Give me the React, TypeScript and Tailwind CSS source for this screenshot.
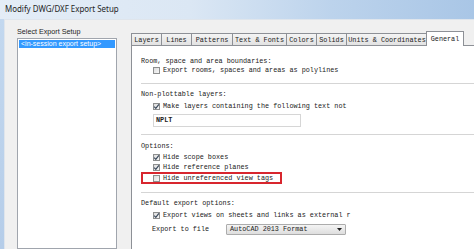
import React from "react";

const mono = { fontFamily: '"Liberation Mono", "DejaVu Sans Mono", monospace' };

function Check({ on }: { on?: boolean }) {
  return (
    <span className="relative inline-block h-[7px] w-[7px] shrink-0 border border-[#8e8f8f] bg-[linear-gradient(135deg,#dcdcdc,#f8f8f8)]">
      {on && (
        <svg viewBox="0 0 7 7" className="absolute -left-px -top-px h-[7px] w-[7px]">
          <path d="M1.2 3.6 L2.8 5.3 L5.9 1.3" fill="none" stroke="#3b4a5c" strokeWidth="1.2" />
        </svg>
      )}
    </span>
  );
}

function Row({ on, label }: { on?: boolean; label: string }) {
  return (
    <div className="flex h-[9px] items-center gap-[3px] pl-[12px] leading-[9px]">
      <Check on={on} />
      <span className="whitespace-nowrap">{label}</span>
    </div>
  );
}

const tabs = [
  { name: "Layers", w: "w-[31px]" },
  { name: "Lines", w: "w-[31px]" },
  { name: "Patterns", w: "w-[42px]" },
  { name: "Text & Fonts", w: "w-[55px]" },
  { name: "Colors", w: "w-[31px]" },
  { name: "Solids", w: "w-[31px]" },
  { name: "Units & Coordinates", w: "w-[82px]" },
];

export default function App() {
  return (
    <div className="flex h-[249px] w-[474px] flex-col overflow-hidden bg-[#c7daf0]">
      <div className="flex h-[19px] shrink-0 items-center bg-[linear-gradient(90deg,#e4edf7_0%,#dbe7f4_40%,#bcd3ec_70%,#a9c6e6_100%)] pl-[5px]">
        <span
          className="origin-left scale-x-[0.9] whitespace-nowrap text-[8.8px] text-[#1e1e1e]"
          style={{ fontFamily: '"Noto Sans", "Open Sans", sans-serif' }}
        >
          Modify DWG/DXF Export Setup
        </span>
      </div>
      <div className="flex min-h-0 flex-1">
        <div className="w-[4px] shrink-0 bg-[linear-gradient(180deg,#c3d8ef,#b5cde9)]" />
        <div className="flex min-h-0 flex-1 border-l border-t border-[#dfe5ec] bg-[#f0f0f0]">
          <div className="flex w-[112px] shrink-0 flex-col pl-[12px]">
            <div className="mt-[6px] h-[11px] whitespace-nowrap text-[7.2px] leading-[11px] text-[#1e1e1e]" style={{ fontFamily: '"Liberation Sans", Arial, sans-serif' }}>
              Select Export Setup
            </div>
            <div className="mt-[1px] flex-1 border border-[#a0a5ad] bg-white pt-px pl-px pr-px">
              <div className="h-[8px] whitespace-nowrap bg-[#3399ff] pl-[2px] text-[7px] leading-[8px] text-white" style={{ fontFamily: '"Liberation Sans", Arial, sans-serif' }}>
                &lt;in-session export setup&gt;
              </div>
            </div>
          </div>
          <div className="flex min-w-0 flex-1 flex-col pl-[14px] text-[6.8px] text-[#222]" style={mono}>
            <div className="flex h-[25px] shrink-0 items-end">
              {tabs.map((t) => (
                <div
                  key={t.name}
                  className={`${t.w} -mr-px flex h-[12px] shrink-0 items-center justify-center whitespace-nowrap border border-b-0 border-[#8d9096] bg-[linear-gradient(180deg,#f4f4f4,#e2e2e2)] leading-[10px]`}
                >
                  {t.name}
                </div>
              ))}
              <div className="relative z-10 -mb-px -ml-px flex h-[15px] w-[38px] shrink-0 items-start justify-center whitespace-nowrap border border-b-0 border-[#8d9096] bg-white pt-[2px] leading-[10px]">
                General
              </div>
            </div>
            <div className="flex-1 border-l border-t border-[#8d9096] bg-white pl-[9px]">
              <div className="mt-[11px] h-[9px] whitespace-nowrap leading-[9px]">Room, space and area boundaries:</div>
              <Row label="Export rooms, spaces and areas as polylines" />
              <div className="mt-[8px] h-[2px] border-t border-[#d5d5d5] bg-white" />
              <div className="mt-[5px] h-[9px] whitespace-nowrap leading-[9px]">Non-plottable layers:</div>
              <div className="mt-[3px]">
                <Row on label="Make layers containing the following text not" />
              </div>
              <div className="ml-[12px] mt-[3px] flex h-[13px] w-[148px] items-center border border-[#d6d6d6] bg-white pl-[2px] font-bold">
                NPLT
              </div>
              <div className="mt-[7px] h-[2px] border-t border-[#d5d5d5] bg-white" />
              <div className="mt-[6px] h-[9px] whitespace-nowrap leading-[9px]">Options:</div>
              <div className="mt-[1px] flex h-[10px] items-center">
                <Row on label="Hide scope boxes" />
              </div>
              <div className="flex h-[10px] items-center">
                <Row on label="Hide reference planes" />
              </div>
              <div className="flex h-[12px] w-[141px] items-center border-2 border-[#d8262e] pl-0">
                <div className="-ml-[2px]">
                  <Row label="Hide unreferenced view tags" />
                </div>
              </div>
              <div className="mt-[8px] h-[2px] border-t border-[#d5d5d5] bg-white" />
              <div className="mt-[5px] h-[9px] whitespace-nowrap leading-[9px]">Default export options:</div>
              <div className="mt-[3px]">
                <Row on label="Export views on sheets and links as external r" />
              </div>
              <div className="mt-[4px] flex h-[11px] items-center">
                <span className="ml-[11px] w-[74px] whitespace-nowrap">Export to file</span>
                <div className="flex h-[11px] w-[120px] items-center justify-between rounded-[1px] border border-[#acacac] bg-[linear-gradient(180deg,#f4f4f4,#dedede)] pl-[3px] pr-[3px]">
                  <span className="whitespace-nowrap">AutoCAD 2013 Format</span>
                  <svg viewBox="0 0 5 3" className="h-[3px] w-[5px]">
                    <path d="M0 0 H5 L2.5 3 Z" fill="#222" />
                  </svg>
                </div>
              </div>
            </div>
          </div>
        </div>
      </div>
    </div>
  );
}
